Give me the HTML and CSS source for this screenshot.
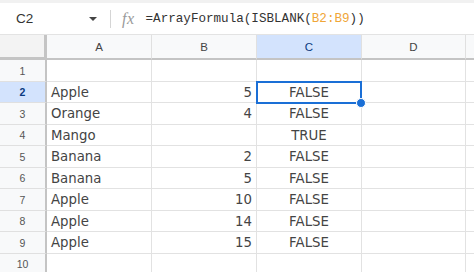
FILE: index.html
```html
<!DOCTYPE html>
<html>
<head>
<meta charset="utf-8">
<link rel="stylesheet" href="styles.css">
</head>
<body>
<div class="app">
  <div class="topline"></div>
  <div class="formula-bar">
    <div class="namebox">C2</div>
    <div class="caret"></div>
    <div class="sep"></div>
    <div class="fx">fx</div>
    <div class="formula">=ArrayFormula(ISBLANK(<span class="ref">B2:B9</span>))</div>
  </div>
  <div class="sheet">
    <div class="grid">
      <div class="corner"></div>
      <div class="colhead">A</div>
      <div class="colhead">B</div>
      <div class="colhead sel">C</div>
      <div class="colhead">D</div>
      <div class="colhead last"></div>

      <div class="rowhead r-a">1</div><div class="cell r-a"></div><div class="cell num r-a"></div><div class="cell ctr r-a"></div><div class="cell r-a"></div><div class="cell last r-a"></div>
      <div class="rowhead sel r-b">2</div><div class="cell r-b">Apple</div><div class="cell num r-b">5</div><div class="cell ctr r-b">FALSE</div><div class="cell r-b"></div><div class="cell last r-b"></div>
      <div class="rowhead r-a">3</div><div class="cell r-a">Orange</div><div class="cell num r-a">4</div><div class="cell ctr r-a">FALSE</div><div class="cell r-a"></div><div class="cell last r-a"></div>
      <div class="rowhead r-b">4</div><div class="cell r-b">Mango</div><div class="cell num r-b"></div><div class="cell ctr r-b">TRUE</div><div class="cell r-b"></div><div class="cell last r-b"></div>
      <div class="rowhead r-a">5</div><div class="cell r-a">Banana</div><div class="cell num r-a">2</div><div class="cell ctr r-a">FALSE</div><div class="cell r-a"></div><div class="cell last r-a"></div>
      <div class="rowhead r-b">6</div><div class="cell r-b">Banana</div><div class="cell num r-b">5</div><div class="cell ctr r-b">FALSE</div><div class="cell r-b"></div><div class="cell last r-b"></div>
      <div class="rowhead r-a">7</div><div class="cell r-a">Apple</div><div class="cell num r-a">10</div><div class="cell ctr r-a">FALSE</div><div class="cell r-a"></div><div class="cell last r-a"></div>
      <div class="rowhead r-b">8</div><div class="cell r-b">Apple</div><div class="cell num r-b">14</div><div class="cell ctr r-b">FALSE</div><div class="cell r-b"></div><div class="cell last r-b"></div>
      <div class="rowhead r-a">9</div><div class="cell r-a">Apple</div><div class="cell num r-a">15</div><div class="cell ctr r-a">FALSE</div><div class="cell r-a"></div><div class="cell last r-a"></div>
      <div class="rowhead r-b">10</div><div class="cell r-b"></div><div class="cell num r-b"></div><div class="cell ctr r-b"></div><div class="cell r-b"></div><div class="cell last r-b"></div>
    </div>
    <div class="selection"><div class="handle"></div></div>
  </div>
</div>
</body>
</html>
```
FILE: styles.css
```css
html, body {
  margin: 0;
  padding: 0;
  background: #ffffff;
}
.app {
  width: 474px;
  height: 272px;
  overflow: hidden;
  font-family: "DejaVu Sans", sans-serif;
}
.topline {
  height: 3px;
  background: #f1f1f1;
}
.formula-bar {
  border-bottom: 1px solid #e3e3e3;
  display: flex;
  align-items: center;
  box-sizing: border-box;
  height: 32px;
}
.namebox {
  width: 76px;
  padding-left: 16px;
  box-sizing: border-box;
  font-family: "Liberation Sans", sans-serif;
  font-size: 13.5px;
  color: #333;
}
.caret {
  width: 0;
  height: 0;
  border-left: 4px solid transparent;
  border-right: 4px solid transparent;
  border-top: 4px solid #444;
  margin-left: 13px;
}
.sep {
  width: 1px;
  height: 18px;
  background: #d5d5d5;
  margin-left: 13px;
}
.fx {
  font-family: "Liberation Serif", serif;
  font-style: italic;
  font-size: 16px;
  color: #9a9a9a;
  margin-left: 11px;
  letter-spacing: 0.5px;
}
.formula {
  font-family: "Liberation Mono", monospace;
  font-size: 12.6px;
  color: #333;
  margin-left: 11px;
}
.ref {
  color: #f0a637;
}
.sheet {
  position: relative;
}
.grid {
  display: grid;
  grid-template-columns: 47px 105px 105px 105px 104px 8px;
  grid-template-rows: 25px 22px 21px 22px 21px 22px 21px 22px 21px 22px 21px;
}
.corner {
  background: #f3f3f3;
  border-right: 3px solid #c4c4c4;
  border-bottom: 3px solid #c4c4c4;
  box-sizing: border-box;
}
.colhead {
  background: #f8f9fa;
  border-right: 1px solid #e0e0e0;
  border-bottom: 2px solid #c4c4c4;
  box-sizing: border-box;
  display: flex;
  align-items: center;
  justify-content: center;
  font-family: "Liberation Sans", sans-serif;
  font-size: 11.5px;
  color: #444;
}
.colhead.sel {
  background: #d3e3fd;
  color: #0b3a80;
}
.colhead.last {
  border-right: none;
}
.rowhead {
  background: #f8f9fa;
  border-right: 2px solid #c4c4c4;
  border-bottom: 1px solid #e0e0e0;
  box-sizing: border-box;
  display: flex;
  align-items: center;
  justify-content: center;
  font-family: "Liberation Sans", sans-serif;
  font-size: 10.5px;
  color: #555;
}
.rowhead.sel {
  background: #d3e3fd;
  color: #0b3a80;
  font-weight: bold;
}
.cell {
  border-right: 1px solid #e2e2e2;
  border-bottom: 1px solid #e2e2e2;
  box-sizing: border-box;
  display: flex;
  align-items: center;
  padding: 0 4px;
  font-size: 13.3px;
  color: #444;
  white-space: nowrap;
}
.cell.num {
  justify-content: flex-end;
}
.cell.ctr {
  justify-content: center;
}
.cell.last {
  border-right: none;
}
.selection {
  position: absolute;
  left: 256px;
  top: 46px;
  width: 106px;
  height: 23px;
  border: 2px solid #1a6fd6;
  box-sizing: border-box;
}
.handle {
  position: absolute;
  right: -6px;
  bottom: -6px;
  width: 8px;
  height: 8px;
  border-radius: 50%;
  background: #1a6fd6;
  border: 1px solid #fff;
}
```
